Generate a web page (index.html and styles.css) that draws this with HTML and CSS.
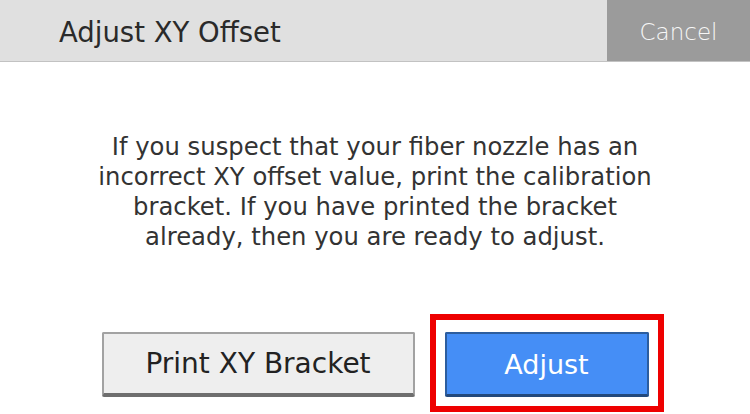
FILE: index.html
```html
<!DOCTYPE html>
<html>
<head>
<meta charset="utf-8">
<link rel="stylesheet" href="styles.css">
</head>
<body>
<div class="screen">
  <header class="topbar">
    <div class="title">Adjust XY Offset</div>
    <div class="cancel">Cancel</div>
  </header>
  <main class="content">
    <p class="message">If you suspect that your fiber nozzle has an<br>incorrect XY offset value, print the calibration<br>bracket. If you have printed the bracket<br>already, then you are ready to adjust.</p>
    <div class="actions">
      <div class="btn btn-secondary">Print XY Bracket</div>
      <div class="highlight">
        <div class="btn btn-primary">Adjust</div>
      </div>
    </div>
  </main>
</div>
</body>
</html>
```
FILE: styles.css
```css
html, body {
  margin: 0;
  padding: 0;
  background: #ffffff;
}
.screen {
  width: 750px;
  height: 414px;
  overflow: hidden;
  font-family: "DejaVu Sans", "Liberation Sans", sans-serif;
  display: flex;
  flex-direction: column;
}
.topbar {
  display: flex;
  height: 61px;
  background: #e0e0e0;
  border-bottom: 1px solid #c2c2c2;
  flex-shrink: 0;
}
.title {
  flex: 1;
  display: flex;
  align-items: center;
  padding-left: 59px;
  padding-top: 2px;
  font-size: 27.5px;
  color: #2a2a2a;
}
.cancel {
  width: 143px;
  background: #9b9b9b;
  color: #f7f7f7;
  font-size: 23px;
  font-weight: 200;
  display: flex;
  align-items: center;
  justify-content: center;
  padding-top: 2px;
}
.content {
  display: flex;
  flex-direction: column;
  align-items: center;
}
.message {
  margin: 70px 0 0 0;
  font-size: 24.3px;
  line-height: 30px;
  color: #333333;
  text-align: center;
}
.actions {
  margin-top: 80px;
  display: flex;
  gap: 30px;
  justify-content: center;
}
.btn {
  height: 65px;
  box-sizing: border-box;
  display: flex;
  align-items: center;
  justify-content: center;
  border-radius: 2px;
}
.btn-secondary {
  width: 313px;
  background: #eeeeee;
  border: 2px solid #a2a2a2;
  border-bottom: 4px solid #6e6e6e;
  color: #222222;
  font-size: 28px;
}
.btn-primary {
  width: 204px;
  background: #458ef6;
  border: 2px solid #2c5d9f;
  border-bottom: 3px solid #23497c;
  color: #ffffff;
  font-size: 27px;
}
.highlight {
  position: relative;
}
.highlight::after {
  content: "";
  position: absolute;
  left: -15px;
  right: -15px;
  top: -18px;
  bottom: -15px;
  border: 6px solid #ee0000;
}
```
